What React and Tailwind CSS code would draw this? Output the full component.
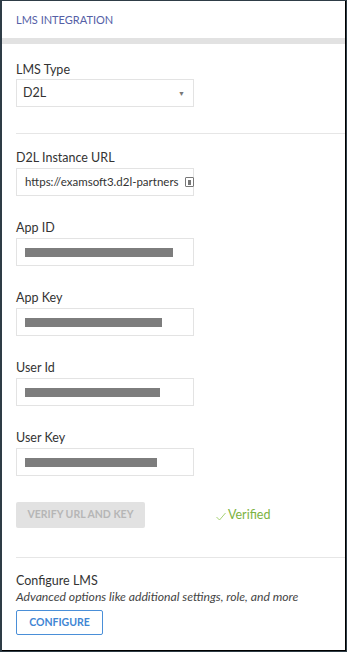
import React from "react";

const font = { fontFamily: "Lato, 'Open Sans', sans-serif" };

function Label({ children }) {
  return <div className="text-[12.5px] leading-[16px] text-[#333]">{children}</div>;
}

function MaskedInput({ barW }) {
  return (
    <div className="mt-[2px] w-[178px] h-[28px] border border-[#e3e3e3] bg-white flex items-center pl-[8px]">
      <div className="h-[9px] bg-[#7d7d7d]" style={{ width: barW }} />
    </div>
  );
}

export default function App() {
  return (
    <div className="w-[347px] h-[652px] bg-[#2e3c46] pl-[2px] pt-[1px] pb-[1px] pr-[1px] overflow-hidden" style={font}>
      <div className="w-full h-full bg-white border-r border-b border-black overflow-hidden">
        <div className="h-[37px] flex items-center pl-[14px] pt-[1px]">
          <span className="text-[11px] text-[#5560a6]">LMS INTEGRATION</span>
        </div>
        <div className="h-[6px] bg-[#e2e2e2]" />
        <div className="pl-[14px] pt-[18px]">
          <Label>LMS Type</Label>
          <div className="mt-[1px] w-[178px] h-[28px] border border-[#e3e3e3] flex items-center justify-between pl-[6px] pr-[8px]">
            <span className="text-[12.5px] text-[#333]">D2L</span>
            <span className="text-[7px] text-[#777]">▼</span>
          </div>
          <div className="mt-[26px] h-px bg-[#e6e6e6]" />
          <div className="pt-[16px]">
            <Label>D2L Instance URL</Label>
            <div className="mt-[2px] w-[178px] h-[28px] border border-[#e3e3e3] flex items-center pl-[8px] pr-[6px]">
              <span className="text-[11.5px] text-[#333] whitespace-nowrap">https://examsoft3.d2l-partners</span>
              <span className="ml-[6px] w-[9px] h-[10px] border border-[#777] rounded-[1px] flex items-center justify-center shrink-0">
                <span className="w-[3px] h-[5px] bg-[#777]" />
              </span>
            </div>
          </div>
          <div className="pt-[24px]">
            <Label>App ID</Label>
            <MaskedInput barW={148} />
          </div>
          <div className="pt-[24px]">
            <Label>App Key</Label>
            <MaskedInput barW={137} />
          </div>
          <div className="pt-[24px]">
            <Label>User Id</Label>
            <MaskedInput barW={135} />
          </div>
          <div className="pt-[24px]">
            <Label>User Key</Label>
            <MaskedInput barW={132} />
          </div>
          <div className="mt-[26px] flex items-center">
            <div className="w-[129px] h-[26px] rounded-[2px] bg-[#e2e2e2] flex items-center justify-center text-[10.5px] font-bold text-[#b6b6b6]">VERIFY URL AND KEY</div>
            <div className="ml-[71px] flex items-center text-[12.5px] text-[#7cb342]">
              <svg width="10" height="9" viewBox="0 0 10 9" className="mr-[2px] mt-[2px]">
                <path d="M0.5 5 L3.5 8 L9.5 1" fill="none" stroke="#9ccc65" strokeWidth="0.9" />
              </svg>
              Verified
            </div>
          </div>
          <div className="mt-[29px] h-px bg-[#e6e6e6]" />
          <div className="pt-[15px]">
            <div className="text-[12.5px] leading-[16px] text-[#333]">Configure LMS</div>
            <div className="text-[12.2px] leading-[16px] italic text-[#444]">Advanced options like additional settings, role, and more</div>
            <div className="mt-[5px] w-[87px] h-[25px] border border-[#4a8fd8] rounded-[2px] flex items-center justify-center text-[10.5px] font-bold text-[#3f86d4]">CONFIGURE</div>
          </div>
        </div>
      </div>
    </div>
  );
}
